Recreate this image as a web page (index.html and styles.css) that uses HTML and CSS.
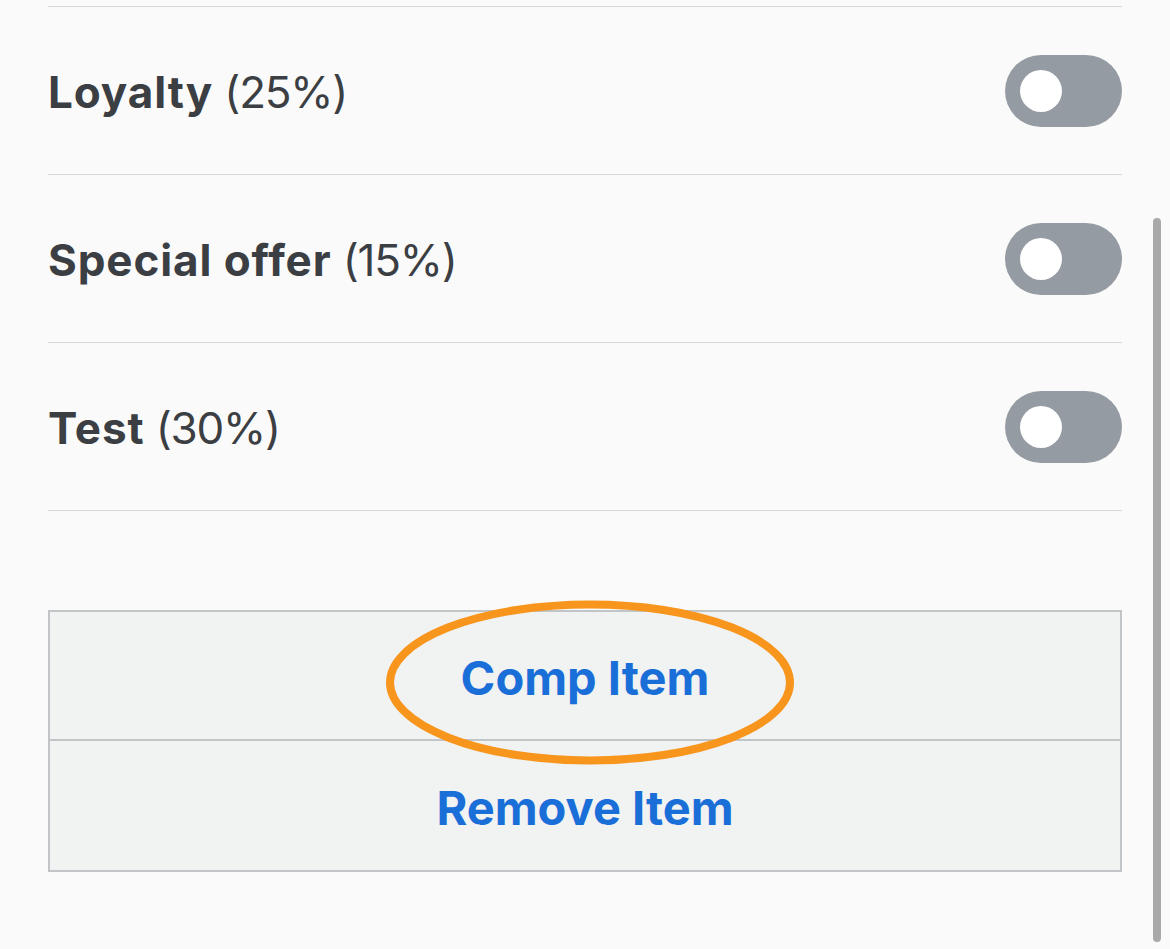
FILE: index.html
```html
<!DOCTYPE html>
<html lang="en">
<head>
    <meta charset="UTF-8">
    <meta name="viewport" content="width=device-width, initial-scale=1.0">
    <title>Discounts</title>
    <link rel="stylesheet" href="styles.css">
</head>
<body>
    <div class="page">
        <div class="list">
            <div class="row">
                <p class="label"><b>Loyalty</b> (25%)</p>
                <span class="toggle"><span class="knob"></span></span>
            </div>
            <div class="row">
                <p class="label"><b>Special offer</b> (15%)</p>
                <span class="toggle"><span class="knob"></span></span>
            </div>
            <div class="row">
                <p class="label"><b>Test</b> (30%)</p>
                <span class="toggle"><span class="knob"></span></span>
            </div>
        </div>

        <div class="actions">
            <button class="action comp">
                Comp Item
                <svg class="circle" width="412" height="167" viewBox="0 0 412 167">
                    <ellipse cx="206" cy="83.5" rx="200" ry="78" fill="none" stroke="#f7951d" stroke-width="8"/>
                </svg>
            </button>
            <button class="action">Remove Item</button>
        </div>
    </div>
    <div class="scrollbar"></div>
</body>
</html>
```

FILE: styles.css
```css
body{
    margin: 0;
    background-color: #fafafa;
    font-family: Inter, "Noto Sans", sans-serif;
    color: #3b3e43;
    overflow: hidden;
}
.page{
    width: 1074px;
    margin-left: 48px;
    padding-top: 6px;
}
.list{
    border-top: 1px solid #d6d6d6;
}
.row{
    height: 167px;
    display: flex;
    align-items: center;
    justify-content: space-between;
    border-bottom: 1px solid #d6d6d6;
}
.label{
    margin: 0;
    font-size: 44px;
    font-weight: 400;
    letter-spacing: -1.2px;
    padding-top: 3px;
}
.label b{
    font-weight: 700;
    letter-spacing: 0.9px;
}
.toggle{
    width: 117px;
    height: 72px;
    border-radius: 36px;
    background-color: #959ba2;
    display: flex;
    align-items: center;
    padding-left: 15px;
    box-sizing: border-box;
}
.knob{
    width: 42px;
    height: 42px;
    border-radius: 50%;
    background-color: #fff;
}
.actions{
    margin-top: 99px;
    border: 2px solid #c2c5c7;
    background-color: #f1f2f2;
    display: flex;
    flex-direction: column;
}
.action{
    position: relative;
    height: 129px;
    border: none;
    background: none;
    font-family: Inter, "Noto Sans", sans-serif;
    font-size: 47px;
    font-weight: 700;
    color: #1a6ed8;
    padding: 4px 0 0;
}
.comp{
    border-bottom: 2px solid #c2c5c7;
}
.circle{
    position: absolute;
    left: 334px;
    top: -13px;
}
.scrollbar{
    position: absolute;
    left: 1153px;
    top: 218px;
    width: 8px;
    height: 724px;
    border-radius: 4px;
    background-color: #a9a9a9;
}
```
